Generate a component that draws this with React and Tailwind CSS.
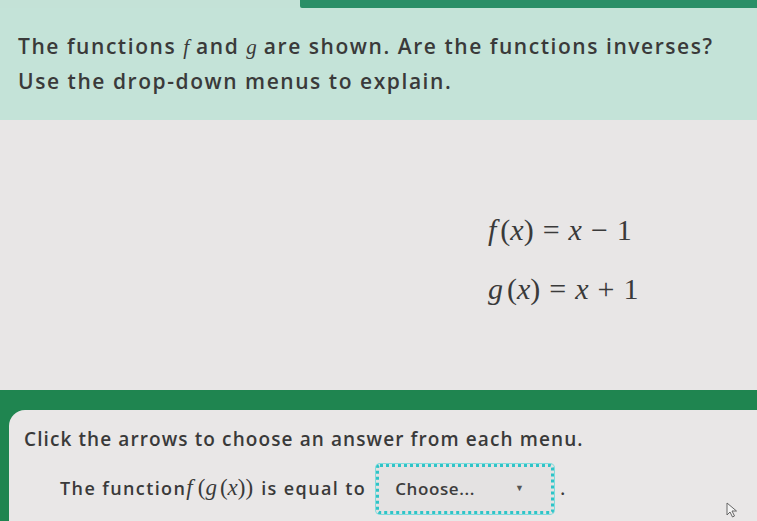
import { useState } from 'react';

// ── Math helpers ──────────────────────────────────────────────────────────────

const mathFont = { fontFamily: '"Liberation Serif", "DejaVu Serif", serif' };

function V({ children }) {
  return <span className="italic">{children}</span>;
}

function Equation({ name, op, k }) {
  return (
    <div className="flex items-baseline gap-[9px] text-[30px] leading-none text-[#3a3a3a] font-medium" style={mathFont}>
      <span>
        <V>{name}</V>
        <span className="ml-[4px]">(</span>
        <V>x</V>
        <span>)</span>
      </span>
      <span>=</span>
      <V>x</V>
      <span>{op}</span>
      <span>{k}</span>
    </div>
  );
}

// ── Main component ────────────────────────────────────────────────────────────

export default function App() {
  const [choice, setChoice] = useState('');

  return (
    <div
      className="w-[757px] h-[521px] overflow-hidden bg-[#e7e4e4] flex flex-col"
      style={{ fontFamily: '"Open Sans", "Noto Sans", sans-serif' }}
    >
      {/* top strip */}
      <div className="h-[8px] bg-[#c4e2d7] flex">
        <div className="ml-[300px] flex-1 bg-[#2a8f67] rounded-bl-[2px]" />
      </div>

      {/* question header */}
      <div className="bg-[#c4e3d8] h-[112px] px-[18px] pt-[21px] text-[#3a3a3a] font-semibold text-[21px] leading-[34px] tracking-[1.55px]">
        <p>
          The functions <span className="italic font-normal tracking-normal" style={mathFont}>f</span> and{' '}
          <span className="italic font-normal tracking-normal" style={mathFont}>g</span> are shown. Are the functions inverses?
        </p>
        <p>Use the drop-down menus to explain.</p>
      </div>

      {/* equations */}
      <div className="h-[270px] bg-[#e8e6e6] flex flex-col items-start pl-[488px] pt-[95px] gap-[29px]">
        <Equation name="f" op="−" k="1" />
        <Equation name="g" op="+" k="1" />
      </div>

      {/* green divider */}
      <div className="h-[20px] bg-[#1f8550]" />

      {/* answer panel */}
      <div className="flex-1 bg-[#1f8550] flex">
        <div className="relative flex-1 ml-[9px] bg-[#e9e7e7] rounded-tl-[16px] pl-[15px] pt-[15px] text-[#3a3a3a]">
          <p className="font-semibold text-[19px] tracking-[1.1px]">Click the arrows to choose an answer from each menu.</p>
          <div className="mt-[10px] ml-[36px] flex items-center text-[18px] font-semibold tracking-[1.4px]">
            <span>The function</span>
            <span className="text-[23px] font-normal tracking-normal" style={mathFont}>
              <V>f</V>
              <span className="ml-[5px]">(</span>
              <V>g</V>
              <span className="ml-[3px]">(</span>
              <V>x</V>
              <span>))</span>
            </span>
            <span className="ml-[8px]">is equal to</span>
            <div className="ml-[10px] relative w-[178px] h-[50px] rounded-[4px] border-[3px] border-dotted border-[#2fc4c8] bg-[#e4e2e2] flex items-center shadow-[0_0_0_1px_#7fdcdc]">
              <select
                value={choice}
                onChange={(e) => setChoice(e.target.value)}
                className="appearance-none w-full h-full bg-transparent pl-[16px] pr-[30px] text-[17px] font-semibold tracking-[0.6px] text-[#3d3d3d] outline-none"
              >
                <option value="">Choose...</option>
                <option value="x">x</option>
                <option value="x-1">x − 1</option>
                <option value="x+1">x + 1</option>
              </select>
              <span className="pointer-events-none absolute right-[26px] top-[14px] text-[9px] text-[#555]">▼</span>
            </div>
            <span className="ml-[6px]">.</span>
          </div>

          {/* mouse pointer */}
          <svg className="absolute left-[717px] top-[92px]" width="12" height="16" viewBox="0 0 12 16" fill="none">
            <path d="M1 1 L1 13 L4 10 L6.5 15 L8.5 14 L6 9 L10.5 9 Z" fill="#f4f4f4" stroke="#666" strokeWidth="1" />
          </svg>
        </div>
      </div>
    </div>
  );
}
